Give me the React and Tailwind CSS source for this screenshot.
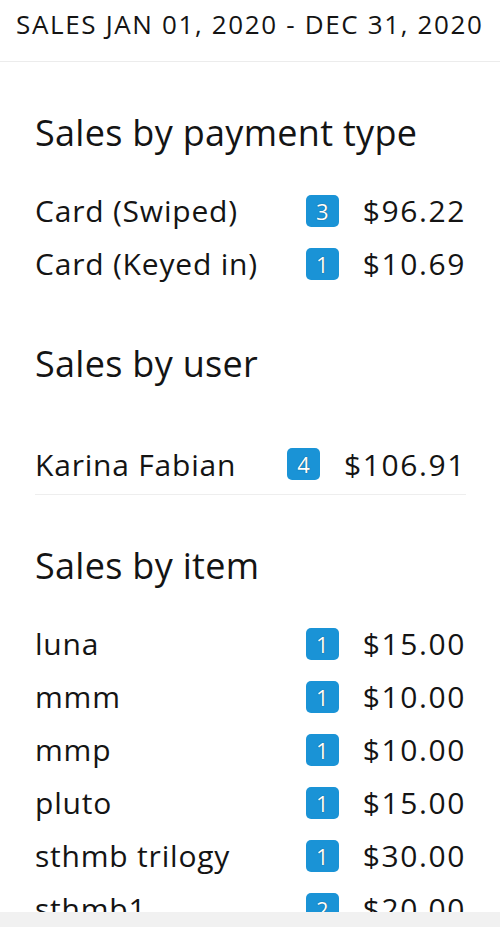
const PAYMENTS = [
  { name: 'Card (Swiped)', count: 3, amount: '$96.22' },
  { name: 'Card (Keyed in)', count: 1, amount: '$10.69' },
]

const USERS = [{ name: 'Karina Fabian', count: 4, amount: '$106.91' }]

const ITEMS = [
  { name: 'luna', count: 1, amount: '$15.00' },
  { name: 'mmm', count: 1, amount: '$10.00' },
  { name: 'mmp', count: 1, amount: '$10.00' },
  { name: 'pluto', count: 1, amount: '$15.00' },
  { name: 'sthmb trilogy', count: 1, amount: '$30.00' },
  { name: 'sthmb1', count: 2, amount: '$20.00' },
]

const Badge = ({ count }) => (
  <span className="flex h-[32px] w-[33px] items-center justify-center rounded-[5px] bg-[#1a93d6] text-[22px] leading-none text-white [text-shadow:0_0_1px_#0b3a56]">
    {count}
  </span>
)

const Row = ({ row, className = '' }) => (
  <div className={`flex items-center ${className}`}>
    <span className="flex-1 text-[30px] tracking-[0.8px] text-[#141414]">{row.name}</span>
    <Badge count={row.count} />
    <span className="ml-[24px] text-[30px] tracking-[1.6px] text-[#141414]">{row.amount}</span>
  </div>
)

const Heading = ({ children, className = '' }) => (
  <h2 className={`h-[40px] text-[36px] leading-[40px] tracking-[0.3px] text-[#141414] ${className}`}>{children}</h2>
)

export default function App() {
  return (
    <div className="min-h-[927px] bg-white font-['Open_Sans',sans-serif]">
      {/* Header */}
      <div className="h-[62px] border-b border-[#ececec] px-[16px] pt-[6px] text-[26px] leading-[36px] tracking-[1.65px] whitespace-nowrap text-[#141414]">
        SALES JAN 01, 2020 - DEC 31, 2020
      </div>

      <div className="pl-[35px] pr-[34px]">
        {/* Payment type */}
        <Heading className="mt-[51px]">Sales by payment type</Heading>
        <div className="mt-[31px]">
          {PAYMENTS.map((p) => (
            <Row key={p.name} row={p} className="h-[53px]" />
          ))}
        </div>

        {/* User */}
        <Heading className="mt-[54px]">Sales by user</Heading>
        <div className="mt-[50px]">
          {USERS.map((u) => (
            <Row key={u.name} row={u} className="h-[61px] border-b border-[#eeeeee]" />
          ))}
        </div>

        {/* Item */}
        <Heading className="mt-[51px]">Sales by item</Heading>
        <div className="mt-[31px]">
          {ITEMS.map((i) => (
            <Row key={i.name} row={i} className="h-[53px]" />
          ))}
        </div>
      </div>

      {/* bottom bar */}
      <div className="fixed inset-x-0 bottom-0 h-[15px] bg-[#f1f1f1]" />
    </div>
  )
}
